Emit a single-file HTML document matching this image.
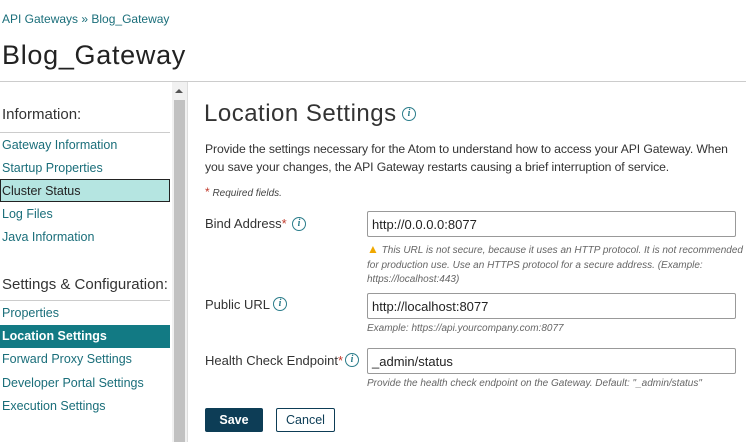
<!DOCTYPE html>
<html><head><style>
*{margin:0;padding:0;box-sizing:border-box}
body{width:746px;height:442px;overflow:hidden;background:#fff;font-family:"Liberation Sans",sans-serif;color:#333;position:relative}
.a{position:absolute;white-space:nowrap}
.nav{color:#1a6e7a;font-size:12.5px}
.it{font-style:italic;font-size:10px;color:#666}
.inp{position:absolute;left:367px;width:369px;height:26px;border:1px solid #999;border-radius:2px;font-size:13px;color:#222;padding:5px 0 0 4px}
.info{position:absolute;display:inline-block;width:14px;height:14px;border:1px solid #2a7c8a;border-radius:50%;color:#2a7c8a;font:italic bold 10px "Liberation Serif",serif;text-align:center;line-height:12px}
.lbl{font-size:13px;color:#333}
.req{color:#c0392b}
</style></head><body>
<div class="a nav" style="left:2px;top:12px;font-size:12px">API Gateways » Blog_Gateway</div>
<div class="a" style="left:2px;top:40px;font-size:27px;color:#222;letter-spacing:0.7px">Blog_Gateway</div>
<div class="a" style="left:0;top:81px;width:746px;height:1px;background:#ccc"></div>
<div class="a" style="left:187px;top:82px;width:1px;height:360px;background:#ddd"></div>
<div class="a" style="left:172px;top:82px;width:15px;height:360px;background:#f1f1f1"></div>
<div class="a" style="left:174px;top:100px;width:11px;height:342px;background:#c1c1c1"></div>
<div class="a" style="left:175px;top:89px;width:0;height:0;border-left:4px solid transparent;border-right:4px solid transparent;border-bottom:4px solid #555"></div>

<div class="a" style="left:2px;top:106px;font-size:15px;color:#333">Information:</div>
<div class="a" style="left:0;top:132px;width:170px;height:1px;background:#ccc"></div>
<div class="a nav" style="left:2px;top:138px">Gateway Information</div>
<div class="a nav" style="left:2px;top:161px">Startup Properties</div>
<div class="a" style="left:0;top:179px;width:170px;height:23px;background:#b5e5e1;border:1px solid #222"></div>
<div class="a nav" style="left:2px;top:184px;color:#222">Cluster Status</div>
<div class="a nav" style="left:2px;top:207px">Log Files</div>
<div class="a nav" style="left:2px;top:230px">Java Information</div>
<div class="a" style="left:2px;top:276px;font-size:15px;color:#333">Settings &amp; Configuration:</div>
<div class="a" style="left:0;top:300px;width:170px;height:1px;background:#ccc"></div>
<div class="a nav" style="left:2px;top:306px">Properties</div>
<div class="a" style="left:0;top:325px;width:170px;height:23px;background:#127a84"></div>
<div class="a nav" style="left:2px;top:329px;color:#fff;font-weight:bold">Location Settings</div>
<div class="a nav" style="left:2px;top:352px">Forward Proxy Settings</div>
<div class="a nav" style="left:2px;top:376px">Developer Portal Settings</div>
<div class="a nav" style="left:2px;top:399px">Execution Settings</div>

<div class="a" style="left:204px;top:100px;font-size:24px;color:#333;letter-spacing:0.5px">Location Settings</div>
<span class="info" style="left:402px;top:107px">i</span>
<div class="a" style="left:205px;top:140px;font-size:12.2px;line-height:18px;color:#333;letter-spacing:-0.1px">Provide the settings necessary for the Atom to understand how to access your API Gateway. When<br>you save your changes, the API Gateway restarts causing a brief interruption of service.</div>
<div class="a it" style="left:205px;top:185px;color:#444"><span class="req" style="font-style:normal;font-size:12px">*</span> Required fields.</div>

<div class="a lbl" style="left:205px;top:216px">Bind Address<span class="req">*</span></div>
<span class="info" style="left:292px;top:217px">i</span>
<div class="inp" style="top:211px">http://0.0.0.0:8077</div>
<div class="a it" style="left:367px;top:242px;line-height:14.5px"><span style="color:#f0a800;font-style:normal;font-size:12px">▲</span> This URL is not secure, because it uses an HTTP protocol. It is not recommended<br>for production use. Use an HTTPS protocol for a secure address. (Example:<br>https://localhost:443)</div>

<div class="a lbl" style="left:205px;top:297px">Public URL</div>
<span class="info" style="left:273px;top:297px">i</span>
<div class="inp" style="top:293px">http://localhost:8077</div>
<div class="a it" style="left:367px;top:323px">Example: https://api.yourcompany.com:8077</div>

<div class="a lbl" style="left:205px;top:353px">Health Check Endpoint<span class="req">*</span></div>
<span class="info" style="left:345px;top:353px">i</span>
<div class="inp" style="top:348px">_admin/status</div>
<div class="a it" style="left:367px;top:378px">Provide the health check endpoint on the Gateway. Default: "_admin/status"</div>

<div class="a" style="left:205px;top:408px;width:58px;height:24px;background:#0d3d56;border-radius:2px;color:#fff;font-weight:bold;font-size:12.5px;text-align:center;line-height:24px">Save</div>
<div class="a" style="left:276px;top:408px;width:59px;height:24px;border:1px solid #0d3d56;border-radius:2px;color:#0d3d56;font-size:12.5px;text-align:center;line-height:22px">Cancel</div>
</body></html>
